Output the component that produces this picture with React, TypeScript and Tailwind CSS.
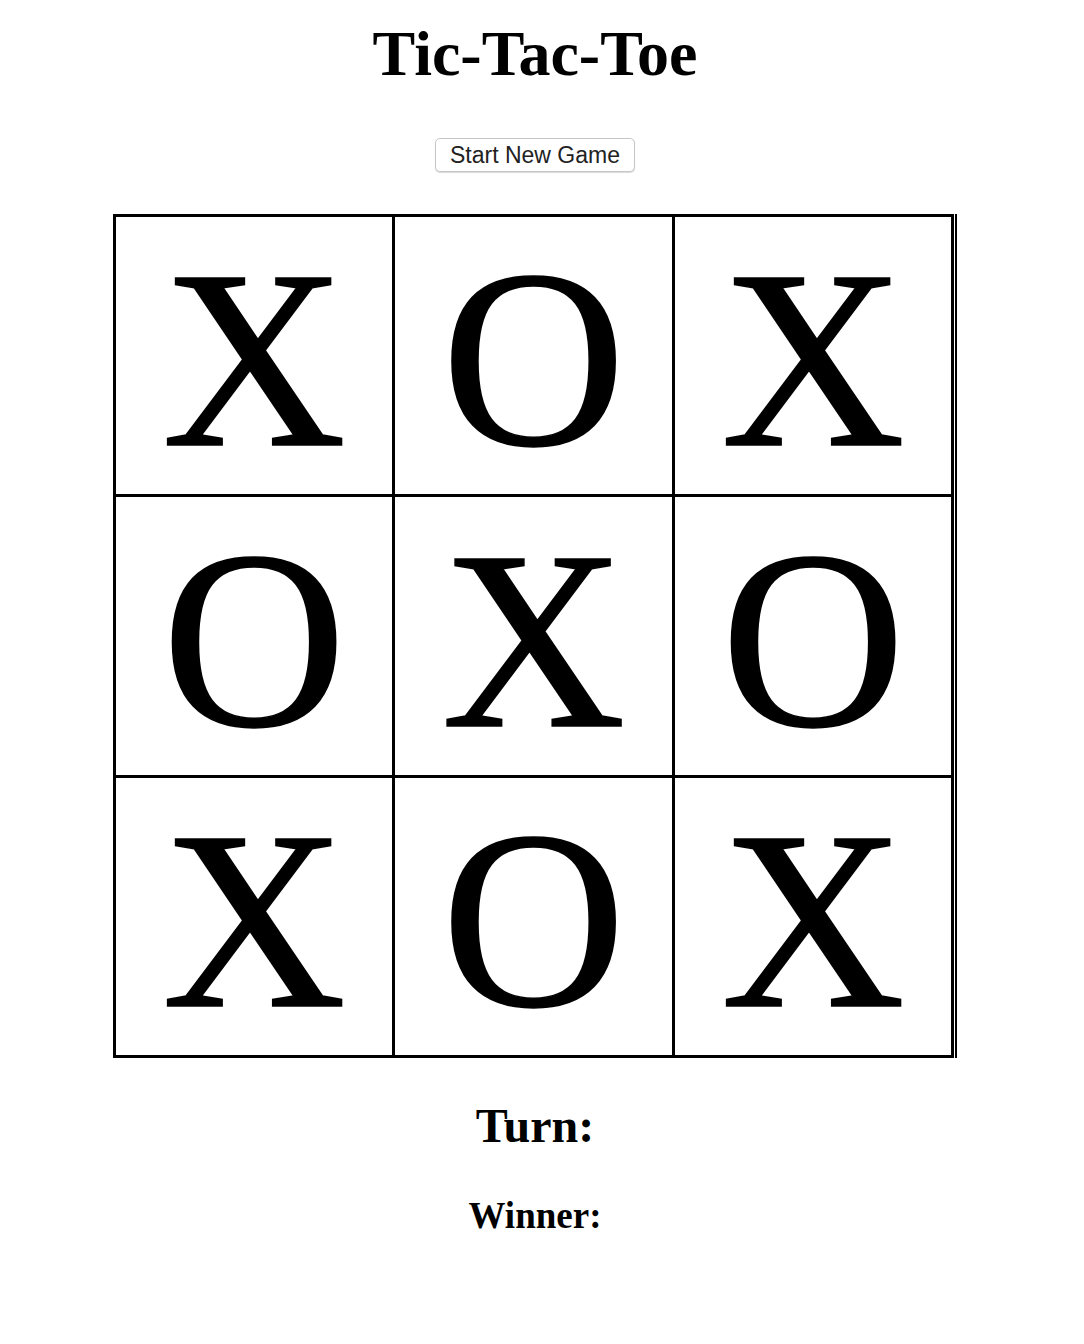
import React from "react";

type Mark = "X" | "O" | null;

const BOARD: Mark[] = ["X", "O", "X", "O", "X", "O", "X", "O", "X"];

function Cell({ value }: { value: Mark }) {
  return (
    <button
      type="button"
      className="flex items-center justify-center border-r-[3px] border-b-[3px] border-black bg-white pt-[8px] text-[255px] leading-none text-black [-webkit-text-stroke:1.5px_black] cursor-pointer"
      style={{ fontFamily: '"Liberation Serif", "Times New Roman", serif' }}
    >
      {value}
    </button>
  );
}

export default function App() {
  return (
    <div className="min-h-screen bg-white">
      <div
        className="flex w-[1070px] flex-col items-center text-black"
        style={{ fontFamily: '"Liberation Serif", "Times New Roman", serif' }}
      >
        <h1 className="mt-[22px] text-[64px] font-bold leading-none">
          Tic-Tac-Toe
        </h1>

        <button
          type="button"
          className="mt-[52px] h-[34px] w-[200px] rounded-[5px] border border-[#c6c6c6] bg-white text-[23px] leading-none text-[#222] shadow-[0_1px_1px_rgba(0,0,0,0.15)]"
          style={{ fontFamily: '"Liberation Sans", Arial, sans-serif' }}
        >
          Start New Game
        </button>

        {/* board: outer table edge shows as a thin second line on the right */}
        <div className="mt-[42px] border-r-2 border-black pr-px">
          <div className="grid grid-cols-[279px_280px_279px] grid-rows-[280px_281px_280px] border-t-[3px] border-l-[3px] border-black">
            {BOARD.map((v, i) => (
              <Cell key={i} value={v} />
            ))}
          </div>
        </div>

        <h2 className="mt-[44px] text-[48px] font-bold leading-none">
          Turn:
        </h2>
        <h3 className="mt-[47px] text-[37px] font-bold leading-none">
          Winner:
        </h3>
      </div>
    </div>
  );
}
